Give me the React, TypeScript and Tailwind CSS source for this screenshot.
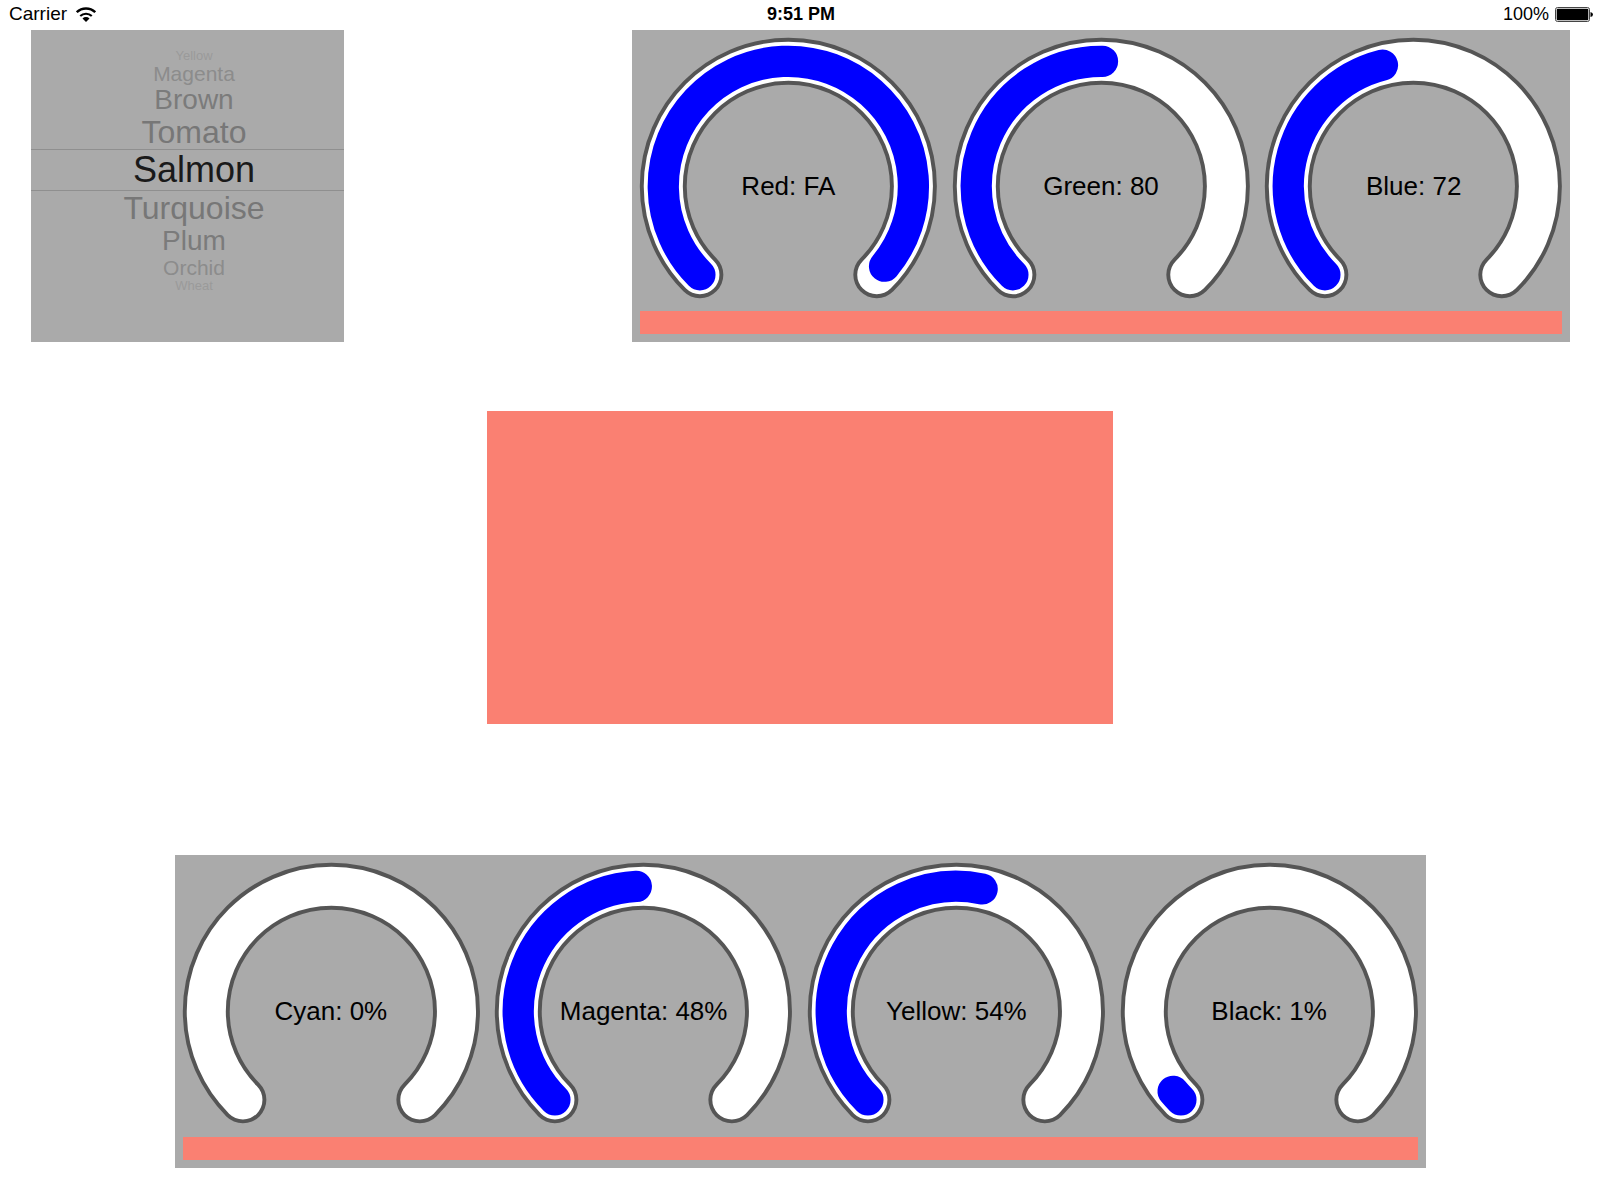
import { useState } from "react";

type RGB = [number, number, number];

const PALETTE: { name: string; rgb: RGB }[] = [
  { name: "Yellow", rgb: [255, 255, 0] },
  { name: "Magenta", rgb: [255, 0, 255] },
  { name: "Brown", rgb: [165, 42, 42] },
  { name: "Tomato", rgb: [255, 99, 71] },
  { name: "Salmon", rgb: [250, 128, 114] },
  { name: "Turquoise", rgb: [64, 224, 208] },
  { name: "Plum", rgb: [221, 160, 221] },
  { name: "Orchid", rgb: [218, 112, 214] },
  { name: "Wheat", rgb: [245, 222, 179] },
];

// Wheel rows from the far top edge to the far bottom edge.
const WHEEL_ROWS = [
  { offset: -4, style: "h-[14px] text-[13px] text-[#9a9a9a]" },
  { offset: -3, style: "h-[22px] text-[21px] text-[#8c8c8c]" },
  { offset: -2, style: "h-[31px] text-[28px] text-[#7b7b7b]" },
  { offset: -1, style: "h-[34px] text-[32px] text-[#777777]" },
  { offset: 0, style: "h-[42px] border-y border-[#8f8f8f] text-[36px] text-[#1a1a1a]" },
  { offset: 1, style: "h-[34px] text-[32px] text-[#777777]" },
  { offset: 2, style: "h-[31px] text-[28px] text-[#7b7b7b]" },
  { offset: 3, style: "h-[22px] text-[21px] text-[#8c8c8c]" },
  { offset: 4, style: "h-[14px] text-[13px] text-[#9a9a9a]" },
];

const hex = (n: number) => n.toString(16).toUpperCase().padStart(2, "0");

function toCmyk([r, g, b]: RGB) {
  const max = Math.max(r, g, b) / 255;
  const part = (v: number) => (max === 0 ? 0 : (max - v / 255) / max);
  return [part(r), part(g), part(b), 1 - max];
}

function toRgb([c, m, y, k]: number[]): RGB {
  const part = (v: number) => Math.round(255 * (1 - v) * (1 - k));
  return [part(c), part(m), part(y)];
}

// Arc on a circle of radius 80 around (100, 100), clockwise from the lower left.
function arc(fraction: number) {
  const point = (f: number) => {
    const a = ((135 + 270 * f) * Math.PI) / 180;
    return `${(100 + 80 * Math.cos(a)).toFixed(2)} ${(100 + 80 * Math.sin(a)).toFixed(2)}`;
  };
  return `M${point(0)} A80 80 0 ${fraction * 270 > 180 ? 1 : 0} 1 ${point(fraction)}`;
}

function Gauge(props: {
  label: string;
  fraction: number;
  onChange: (fraction: number) => void;
}) {
  const { label, fraction, onChange } = props;
  return (
    <label className="relative grid min-w-0 flex-1">
      <svg
        viewBox="0 0 200 180"
        className="col-start-1 row-start-1 block w-full"
        fill="none"
        strokeLinecap="round"
        aria-hidden="true"
      >
        <path d={arc(1)} stroke="#555555" strokeWidth="30" />
        <path d={arc(1)} stroke="#ffffff" strokeWidth="25" />
        {fraction > 0 && <path d={arc(fraction)} stroke="#0000ff" strokeWidth="20" />}
      </svg>
      <span className="col-start-1 row-start-1 self-center pt-[30px] text-center text-[26px] leading-8 text-black">
        {label}
      </span>
      <input
        type="range"
        min={0}
        max={1}
        step="any"
        value={fraction}
        onChange={(e) => onChange(Number(e.target.value))}
        className="absolute inset-0 cursor-pointer opacity-0"
      />
    </label>
  );
}

function GaugePanel(props: {
  gauges: { label: string; fraction: number }[];
  color: string;
  onChange: (index: number, fraction: number) => void;
}) {
  return (
    <section className="w-full bg-[#aaaaaa] pb-2">
      <div className="flex">
        {props.gauges.map((g, i) => (
          <Gauge key={i} label={g.label} fraction={g.fraction} onChange={(f) => props.onChange(i, f)} />
        ))}
      </div>
      <div className="mx-2 h-[23px]" style={{ backgroundColor: props.color }} />
    </section>
  );
}

function StatusBar() {
  return (
    <header className="grid h-[30px] grid-cols-3 items-center pr-[7px] pb-[2px] pl-[9px] text-black">
      <div className="flex items-center gap-[9px]">
        <span className="text-[19px]">Carrier</span>
        <svg viewBox="0 0 57 43" className="h-[15px] w-[20px]" fill="none" stroke="#000000" aria-label="Wi-Fi">
          <path d="M2 15 A37.5 37.5 0 0 1 55 15" strokeWidth="7" />
          <path d="M12 26 A23.5 23.5 0 0 1 45 26" strokeWidth="6" />
          <path d="M28.5 43 L18.5 33 A14 14 0 0 1 38.5 33 Z" fill="#000000" stroke="none" />
        </svg>
      </div>
      <span className="text-center text-[18px] font-bold">9:51 PM</span>
      <div className="flex items-center justify-end gap-[6px]">
        <span className="text-[18px]">100%</span>
        <svg viewBox="0 0 38 15" className="h-[15px] w-[38px]" aria-label="Battery full">
          <rect x="0.5" y="0.5" width="34" height="14" rx="2" fill="#ffffff" stroke="#444444" />
          <rect x="1.7" y="1.7" width="31.6" height="11.6" rx="1" fill="#000000" />
          <path d="M35.5 5 Q38 5.5 38 7.5 Q38 9.5 35.5 10 Z" fill="#000000" />
        </svg>
      </div>
    </header>
  );
}

export default function App() {
  const [selected, setSelected] = useState(4);
  const [rgb, setRgb] = useState<RGB>(PALETTE[4].rgb);

  const color = `rgb(${rgb.join(",")})`;
  const cmyk = toCmyk(rgb);

  const pick = (index: number) => {
    setSelected(index);
    setRgb(PALETTE[index].rgb);
  };

  return (
    <main className='min-h-screen bg-white pb-7 font-["Liberation_Sans",Arial,sans-serif]'>
      <StatusBar />
      <div className="flex items-stretch justify-between gap-6 pr-[30px] pl-[31px]">
        <div role="listbox" aria-label="Color" className="w-[313px] shrink-0 bg-[#aaaaaa] pt-[18px]">
          {WHEEL_ROWS.map(({ offset, style }) => {
            const index = (selected + offset + PALETTE.length) % PALETTE.length;
            return (
              <button
                key={offset}
                type="button"
                role="option"
                aria-selected={offset === 0}
                onClick={() => pick(index)}
                className={`flex w-full items-center justify-center pl-[13px] leading-none ${style}`}
              >
                {PALETTE[index].name}
              </button>
            );
          })}
        </div>
        <div className="w-full max-w-[938px]">
          <GaugePanel
            color={color}
            gauges={["Red", "Green", "Blue"].map((name, i) => ({
              label: `${name}: ${hex(rgb[i])}`,
              fraction: rgb[i] / 255,
            }))}
            onChange={(i, f) => setRgb(rgb.map((v, j) => (j === i ? Math.round(f * 255) : v)) as RGB)}
          />
        </div>
      </div>
      <div className="mx-auto mt-[69px] h-[313px] w-full max-w-[626px]" style={{ backgroundColor: color }} />
      <div className="mx-auto mt-[131px] w-full max-w-[1251px]">
        <GaugePanel
          color={color}
          gauges={["Cyan", "Magenta", "Yellow", "Black"].map((name, i) => ({
            label: `${name}: ${Math.floor(cmyk[i] * 100)}%`,
            fraction: cmyk[i],
          }))}
          onChange={(i, f) => setRgb(toRgb(cmyk.map((v, j) => (j === i ? f : v))))}
        />
      </div>
    </main>
  );
}
